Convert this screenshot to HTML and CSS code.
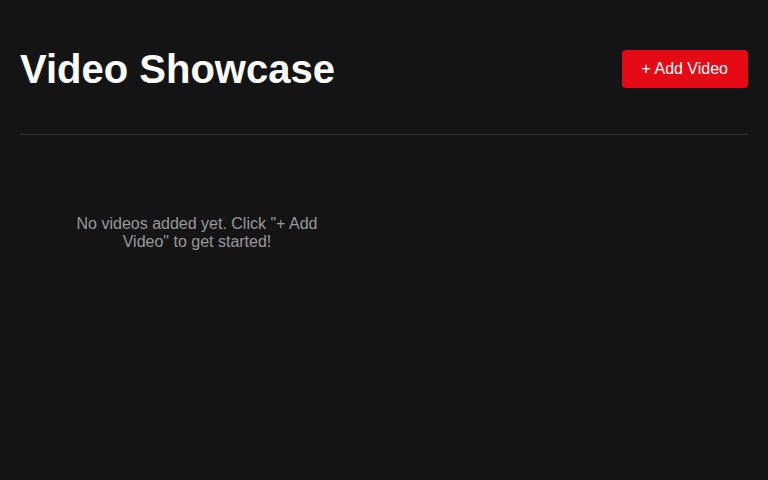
FILE: index.html
```html
<!DOCTYPE html>
<html lang="en">
<head>
<meta charset="utf-8">
<title>Video Showcase</title>
<link rel="stylesheet" href="styles.css">
</head>
<body>
  <header class="header">
    <h1 class="title">Video Showcase</h1>
    <button class="add-btn" type="button">+ Add Video</button>
  </header>
  <main class="grid">
    <div class="empty">No videos added yet. Click "+ Add Video" to get started!</div>
  </main>
</body>
</html>
```
FILE: styles.css
```css
html, body {
  background: #141414;
}
body {
  margin: 0;
  padding: 20px;
  font-family: "Liberation Sans", Arial, sans-serif;
  color: #fff;
}
.header {
  display: flex;
  justify-content: space-between;
  align-items: center;
  padding-bottom: 16px;
  border-bottom: 1px solid #333;
  margin-bottom: 40px;
}
.title {
  font-size: 40px;
  font-weight: bold;
  margin: 26px 0;
  line-height: 46px;
}
.add-btn {
  background: #e50914;
  color: #fff;
  border: none;
  border-radius: 4px;
  padding: 10px 20px;
  font-family: "Liberation Sans", Arial, sans-serif;
  font-size: 16px;
  line-height: 18px;
  cursor: pointer;
}
.grid {
  display: grid;
  grid-template-columns: repeat(auto-fill, minmax(300px, 1fr));
  gap: 20px;
}
.empty {
  padding: 40px;
  text-align: center;
  color: #999;
  font-size: 16px;
  line-height: 18px;
}
```
